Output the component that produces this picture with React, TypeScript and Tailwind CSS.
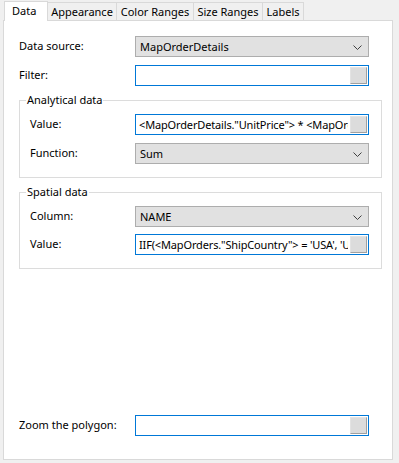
import React from "react";

const font = { fontFamily: '"Noto Sans", "Liberation Sans", sans-serif' };

function Chevron() {
  return (
    <svg width="9" height="6" viewBox="0 0 9 6" className="absolute right-[6px] top-[8px]">
      <polyline points="0.5,0.5 4.5,4.5 8.5,0.5" fill="none" stroke="#404040" strokeWidth="1" />
    </svg>
  );
}

function Combo({ value }: { value: string }) {
  return (
    <div className="relative h-[21px] w-[234px] shrink-0 border border-[#adadad] bg-[#e1e1e1] pl-[4px] text-[11px] leading-[19px] text-black">
      {value}
      <Chevron />
    </div>
  );
}

function TextBox({ value }: { value?: string }) {
  return (
    <div className="flex h-[21px] w-[234px] shrink-0 items-center border border-[#0078d7] bg-white pl-[3px] pr-[1px]">
      <div className="flex-1 overflow-hidden whitespace-nowrap text-[11px] leading-[19px] tracking-[-0.15px] text-black">{value}</div>
      <div className="ml-[2px] h-[17px] w-[17px] shrink-0 border border-[#e3e3e3] border-b-[#a0a0a0] border-r-[#a0a0a0] bg-[#dcdcdc]" />
    </div>
  );
}

function Row({ label, labelW, children, className = "" }: { label: string; labelW: string; children: React.ReactNode; className?: string }) {
  return (
    <div className={"flex items-center " + className}>
      <div className={labelW + " shrink-0 whitespace-nowrap text-[11px] text-black"}>{label}</div>
      {children}
    </div>
  );
}

function Group({ title, children, className = "" }: { title: string; children: React.ReactNode; className?: string }) {
  return (
    <div className={"relative ml-[15px] w-[363px] border border-[#dcdcdc] pl-[10px] " + className}>
      <span className="absolute left-[6px] top-[-9px] bg-white px-[1px] text-[11px] leading-[16px] text-black">{title}</span>
      {children}
    </div>
  );
}

export default function App() {
  const tabs = [
    { t: "Appearance", w: "w-[69px]" },
    { t: "Color Ranges", w: "w-[77px]" },
    { t: "Size Ranges", w: "w-[69px]" },
    { t: "Labels", w: "w-[41px]" },
  ];
  return (
    <div className="h-[463px] w-[399px] overflow-hidden bg-[#f0f0f0]" style={font}>
      <div className="flex h-[20px] items-end pl-[4px]">
        <div className="relative z-10 mb-[-1px] flex h-[20px] w-[44px] items-start border border-b-0 border-[#d9d9d9] bg-white pl-[7px] pt-[1px] text-[11px] leading-[16px] text-black">
          Data
        </div>
        {tabs.map(({ t, w }) => (
          <div
            key={t}
            className={w + " flex h-[18px] items-start justify-center border border-b-0 border-l-0 border-[#d9d9d9] bg-[#f0f0f0] pt-[1px] text-[11px] leading-[15px] text-black"}
          >
            {t}
          </div>
        ))}
      </div>
      <div className="ml-[3px] h-[440px] w-[390px] border border-[#d9d9d9] bg-white">
        <Row label="Data source:" labelW="w-[131px] pl-[15px]" className="mt-[15px]">
          <Combo value="MapOrderDetails" />
        </Row>
        <Row label="Filter:" labelW="w-[131px] pl-[15px]" className="mt-[8px]">
          <TextBox />
        </Row>
        <Group title="Analytical data" className="mt-[14px] pt-[13px] pb-[13px]">
          <Row label="Value:" labelW="w-[105px]">
            <TextBox value={'<MapOrderDetails."UnitPrice"> * <MapOrderDetails."Quantity">'} />
          </Row>
          <Row label="Function:" labelW="w-[105px]" className="mt-[8px]">
            <Combo value="Sum" />
          </Row>
        </Group>
        <Group title="Spatial data" className="mt-[14px] pt-[13px] pb-[13px]">
          <Row label="Column:" labelW="w-[105px]">
            <Combo value="NAME" />
          </Row>
          <Row label="Value:" labelW="w-[105px]" className="mt-[7px]">
            <TextBox value={"IIF(<MapOrders.\"ShipCountry\"> = 'USA', 'United States', <MapOrders.\"ShipCountry\">)"} />
          </Row>
        </Group>
        <Row label="Zoom the polygon:" labelW="w-[131px] pl-[15px]" className="mt-[146px]">
          <TextBox />
        </Row>
      </div>
    </div>
  );
}
